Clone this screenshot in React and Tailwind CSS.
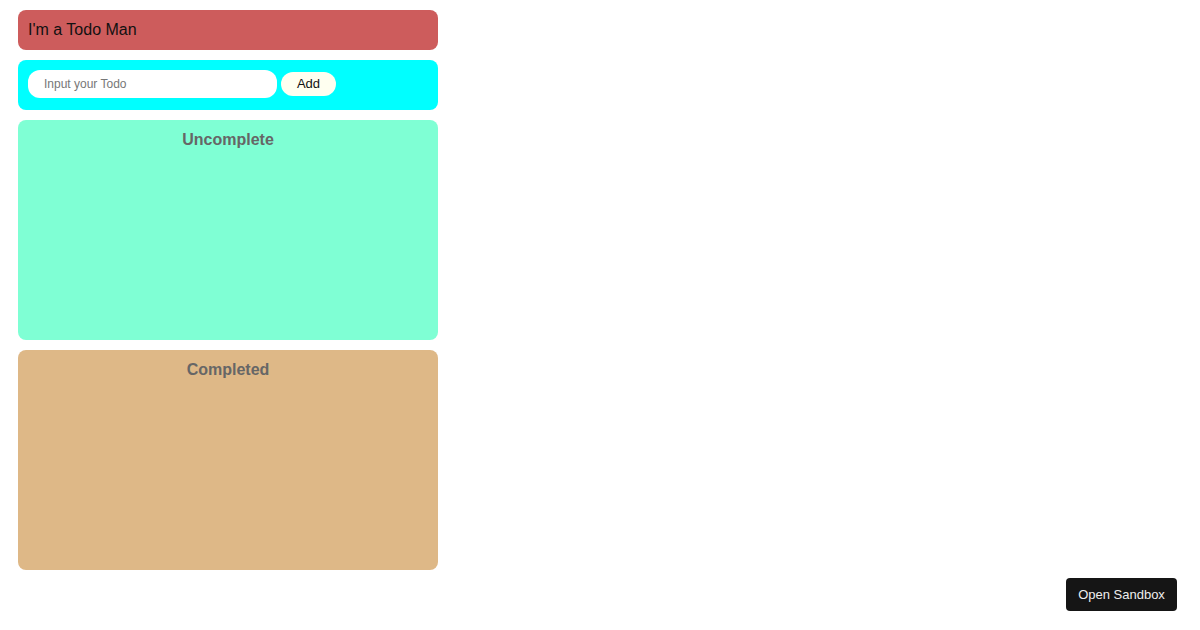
export default function App() {
  return (
    <div className="relative w-[1200px] h-[630px] bg-white font-['Liberation_Sans',Arial,sans-serif]">
      <div className="flex flex-col gap-[10px] pt-[10px] pl-[18px] w-[438px]">
        <div className="h-[40px] rounded-[8px] bg-[#cd5c5c] flex items-center px-[10px] text-[16px] text-[#111]">
          I'm a Todo Man
        </div>
        <div className="h-[50px] rounded-[8px] bg-[#00ffff] flex items-center px-[10px] pb-[2px] gap-[4px]">
          <input
            placeholder="Input your Todo"
            className="w-[249px] h-[28px] rounded-[12px] bg-white px-[16px] text-[12px] text-[#333] placeholder:text-[#777] outline-none border-none"
          />
          <button className="w-[55px] h-[24px] rounded-[12px] bg-[#fffff0] text-[13px] text-[#111]">
            Add
          </button>
        </div>
        <div className="h-[220px] rounded-[8px] bg-[#7fffd4] pt-[8px]">
          <p className="text-center font-bold text-[16px] text-[#666]">Uncomplete</p>
        </div>
        <div className="h-[220px] rounded-[8px] bg-[#deb887] pt-[8px]">
          <p className="text-center font-bold text-[16px] text-[#666]">Completed</p>
        </div>
      </div>
      <button className="absolute left-[1066px] top-[578px] w-[111px] h-[33px] rounded-[4px] bg-[#151515] text-[13px] text-[#eee]">
        Open Sandbox
      </button>
    </div>
  );
}
